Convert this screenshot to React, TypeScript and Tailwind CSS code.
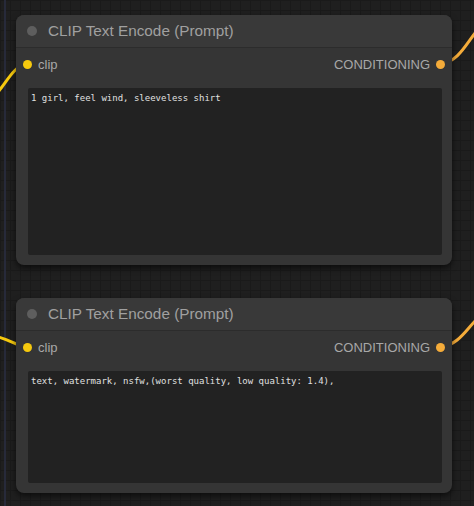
import React from 'react';

type NodeProps = {
  text: string;
  areaHeight: number;
};

function ClipNode({ text, areaHeight }: NodeProps) {
  return (
    <div className="relative w-[436px] rounded-[8px] bg-[#353535] shadow-[0_3px_6px_rgba(0,0,0,0.6)]">
      {/* title */}
      <div className="flex h-[33px] items-center rounded-t-[8px] border-b border-[#2c2c2c] bg-[#393939] pl-[11px]">
        <span className="h-[10px] w-[10px] rounded-full bg-[#5e5e5e]" />
        <span className="ml-[11px] text-[15.3px] leading-none text-[#a0a0a0]">CLIP Text Encode (Prompt)</span>
      </div>
      {/* slots */}
      <div className="flex h-[32px] items-center justify-between pl-[7px] pr-[7px]">
        <div className="flex items-center">
          <span className="h-[9px] w-[9px] rounded-full bg-[#f6c90e]" />
          <span className="ml-[6px] text-[13px] leading-none text-[#a8a8a8]">clip</span>
        </div>
        <div className="flex items-center">
          <span className="text-[13px] leading-none text-[#a8a8a8]">CONDITIONING</span>
          <span className="ml-[6px] h-[9px] w-[9px] rounded-full bg-[#f5ac3a]" />
        </div>
      </div>
      {/* prompt */}
      <div className="pb-[10px] pl-[12px] pr-[10px] pt-[8px]">
        <div
          className="rounded-[2px] bg-[#222222] px-[3px] pt-[4px] font-['DejaVu_Sans_Mono',monospace] text-[9px] leading-[12px] text-[#e0e0e0]"
          style={{ height: areaHeight }}
        >
          {text}
        </div>
      </div>
    </div>
  );
}

export default function App() {
  return (
    <div className="relative h-[506px] w-[474px] overflow-hidden bg-[#1f1f1f] bg-[linear-gradient(#1a1a1a_1px,transparent_1px),linear-gradient(90deg,#1a1a1a_1px,transparent_1px)] bg-[size:10px_10px] font-['Liberation_Sans',Arial,sans-serif]">
      {/* links behind the nodes */}
      <svg className="absolute inset-0" width="474" height="506" viewBox="0 0 474 506" fill="none">
        <rect x="4" y="0" width="2" height="506" fill="#272a3a" />
        <path d="M -2 92 C 8 80, 14 66, 27 64" stroke="#f6c90e" strokeWidth="3" />
        <path d="M 441 64 C 458 62, 466 44, 476 32" stroke="#f5ac3a" strokeWidth="3" />
        <path d="M -2 337 C 10 340, 18 346, 27 347" stroke="#f6c90e" strokeWidth="3" />
        <path d="M 441 347 C 458 345, 466 330, 476 320" stroke="#f5ac3a" strokeWidth="3" />
      </svg>
      <div className="relative flex flex-col gap-[33px] pl-[16px] pt-[15px]">
        <ClipNode text="1 girl, feel wind, sleeveless shirt" areaHeight={167} />
        <ClipNode text="text, watermark, nsfw,(worst quality, low quality: 1.4)," areaHeight={112} />
      </div>
    </div>
  );
}
